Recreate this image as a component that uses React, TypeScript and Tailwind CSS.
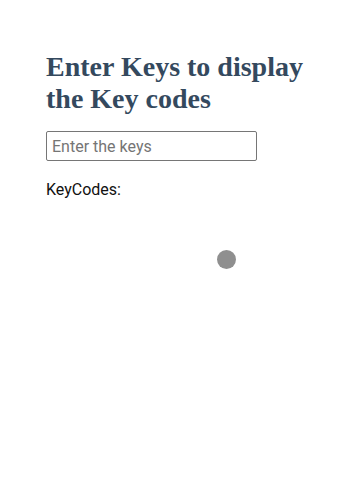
import React from "react";

export default function App() {
  return (
    <div className="relative min-h-[486px] w-full bg-white">
      <div className="px-[46px] pt-[51px]">
        <h1
          className="text-[28px] leading-[32px] font-bold text-[#34495e] w-[275px]"
          style={{ fontFamily: '"Liberation Serif", serif' }}
        >
          Enter Keys to display the Key codes
        </h1>
        <input
          type="text"
          placeholder="Enter the keys"
          className="mt-[16px] block w-[211px] h-[30px] border border-[#767676] rounded-[2px] px-[5px] text-[16px] text-[#222] placeholder:text-[#757575] outline-none"
          style={{ fontFamily: "Roboto, sans-serif" }}
        />
        <p
          className="mt-[19px] text-[16px] leading-[20px] text-[#111]"
          style={{ fontFamily: "Roboto, sans-serif" }}
        >
          KeyCodes:
        </p>
      </div>
      <div className="absolute left-[217px] top-[250px] w-[19px] h-[19px] rounded-full bg-[#8f8f8f]" />
    </div>
  );
}
